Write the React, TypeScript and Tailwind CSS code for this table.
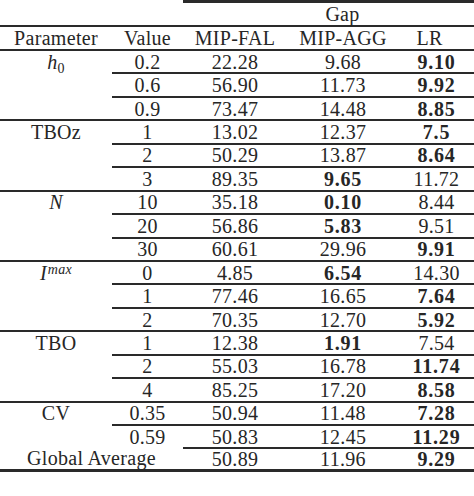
import React from 'react';

type Row = { value: string; fal: string; agg: string; lr: string; bold?: 'agg' | 'lr' };
type Group = { label: React.ReactNode; rows: Row[] };

const groups: Group[] = [
  {
    label: (
      <span className="inline-flex items-baseline">
        <span className="italic">h</span>
        <span className="text-[14px] relative top-[4px]">0</span>
      </span>
    ),
    rows: [
      { value: '0.2', fal: '22.28', agg: '9.68', lr: '9.10', bold: 'lr' },
      { value: '0.6', fal: '56.90', agg: '11.73', lr: '9.92', bold: 'lr' },
      { value: '0.9', fal: '73.47', agg: '14.48', lr: '8.85', bold: 'lr' },
    ],
  },
  {
    label: 'TBOz',
    rows: [
      { value: '1', fal: '13.02', agg: '12.37', lr: '7.5', bold: 'lr' },
      { value: '2', fal: '50.29', agg: '13.87', lr: '8.64', bold: 'lr' },
      { value: '3', fal: '89.35', agg: '9.65', lr: '11.72', bold: 'agg' },
    ],
  },
  {
    label: <span className="italic">N</span>,
    rows: [
      { value: '10', fal: '35.18', agg: '0.10', lr: '8.44', bold: 'agg' },
      { value: '20', fal: '56.86', agg: '5.83', lr: '9.51', bold: 'agg' },
      { value: '30', fal: '60.61', agg: '29.96', lr: '9.91', bold: 'lr' },
    ],
  },
  {
    label: (
      <span className="inline-flex items-baseline">
        <span className="italic">I</span>
        <span className="italic text-[14px] relative top-[-6px] ml-[1px]">max</span>
      </span>
    ),
    rows: [
      { value: '0', fal: '4.85', agg: '6.54', lr: '14.30', bold: 'agg' },
      { value: '1', fal: '77.46', agg: '16.65', lr: '7.64', bold: 'lr' },
      { value: '2', fal: '70.35', agg: '12.70', lr: '5.92', bold: 'lr' },
    ],
  },
  {
    label: 'TBO',
    rows: [
      { value: '1', fal: '12.38', agg: '1.91', lr: '7.54', bold: 'agg' },
      { value: '2', fal: '55.03', agg: '16.78', lr: '11.74', bold: 'lr' },
      { value: '4', fal: '85.25', agg: '17.20', lr: '8.58', bold: 'lr' },
    ],
  },
  {
    label: 'CV',
    rows: [
      { value: '0.35', fal: '50.94', agg: '11.48', lr: '7.28', bold: 'lr' },
      { value: '0.59', fal: '50.83', agg: '12.45', lr: '11.29', bold: 'lr' },
    ],
  },
];

const grid = 'grid grid-cols-[112px_71px_104px_112px_75px] h-[23.45px]';
const line = 'border-t-2 border-[#2a2a2a]';
const cell = 'flex items-center justify-center';

const Num = ({ v, bold }: { v: string; bold?: boolean }) =>
  bold ? <span className="font-bold tracking-[0.8px]">{v}</span> : <span>{v}</span>;

export default function App() {
  return (
    <div className="w-[474px] h-[496px] overflow-hidden bg-white font-['Liberation_Serif',serif] text-[20px] leading-none tracking-[0.3px] text-[#262626]">
      {/* Gap header */}
      <div className="grid grid-cols-[183px_291px] h-[25px]">
        <div />
        <div className="border-t-[3px] border-[#2a2a2a] flex items-center justify-center pl-[28px]">Gap</div>
      </div>
      <div className={`${grid} ${line} h-[24px]`}>
        <div className={cell}>Parameter</div>
        <div className={cell}>Value</div>
        <div className={cell}>MIP-FAL</div>
        <div className={cell}>MIP-AGG</div>
        <div className={`${cell} pr-[14px]`}>LR</div>
      </div>

      {groups.map((g, gi) =>
        g.rows.map((r, ri) => (
          <div key={`${gi}-${ri}`} className={grid}>
            <div className={`${cell} ${ri === 0 ? line : ''}`}>{ri === 0 ? g.label : ''}</div>
            <div className={`${cell} ${line}`}>{r.value}</div>
            <div className={`${cell} ${line}`}>{r.fal}</div>
            <div className={`${cell} ${line}`}>
              <Num v={r.agg} bold={r.bold === 'agg'} />
            </div>
            <div className={`${cell} ${line}`}>
              <Num v={r.lr} bold={r.bold === 'lr'} />
            </div>
          </div>
        ))
      )}

      {/* Global average */}
      <div className={`${grid} border-b-[3px] border-[#2a2a2a] h-[25px]`}>
        <div className={`col-span-2 ${cell}`}>Global Average</div>
        <div className={`${cell} ${line}`}>50.89</div>
        <div className={`${cell} ${line}`}>11.96</div>
        <div className={`${cell} ${line}`}>
          <Num v="9.29" bold />
        </div>
      </div>
    </div>
  );
}
